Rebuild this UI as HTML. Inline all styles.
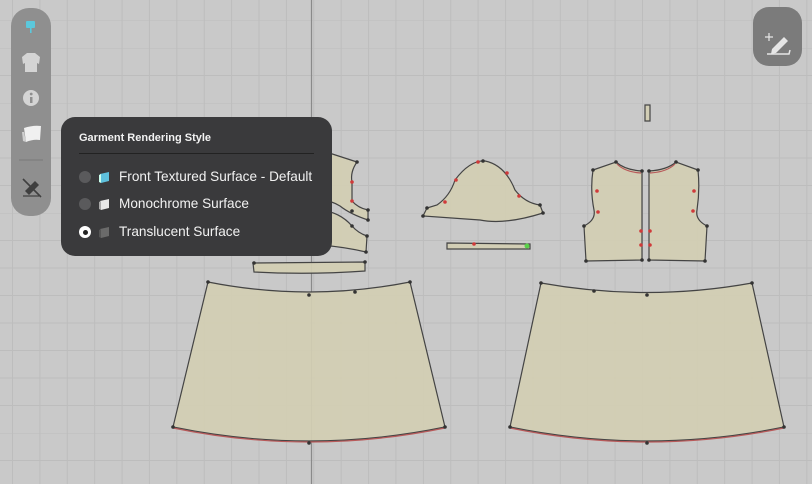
<!DOCTYPE html>
<html><head><meta charset="utf-8"><style>
html,body{margin:0;padding:0}
body{width:812px;height:484px;overflow:hidden;position:relative;background:#c9c9c9;font-family:"Liberation Sans",sans-serif;
background-image:linear-gradient(to right,#bdbdbd 1px,transparent 1px),linear-gradient(to bottom,#bdbdbd 1px,transparent 1px);
background-size:27.4px 27.5px;background-position:12px 20px;}
.side{position:absolute;left:11px;top:8px;width:40px;height:208px;border-radius:18px;background:#8f8f8f;}
.btn{position:absolute;left:753px;top:7px;width:49px;height:59px;border-radius:16px;background:#7b7b7b;}
.pop{position:absolute;left:61px;top:117px;width:271px;height:139px;border-radius:14px;background:#3a3a3c;color:#f2f2f2;}
.pop .t{position:absolute;left:18px;top:15px;font-size:11px;font-weight:bold;}
.pop .hr{position:absolute;left:18px;right:18px;top:36px;height:1px;background:#222;}
.opt{position:absolute;left:18px;font-size:13.6px;height:16px;line-height:16px;}
.opt .r{position:absolute;left:0;top:2px;width:12px;height:12px;border-radius:50%;background:#5a5a5c;}
.opt .r.on{background:#fff;}
.opt .r.on:after{content:"";position:absolute;left:3.5px;top:3.5px;width:5px;height:5px;border-radius:50%;background:#222;}
.opt .i{position:absolute;left:19px;top:2px;}
.opt span{position:absolute;left:40px;white-space:nowrap;}
</style></head><body>
<svg width="812" height="484" style="position:absolute;left:0;top:0">
<line x1="311.5" y1="0" x2="311.5" y2="484" stroke="#8a8a8a" stroke-width="1.2"/>
<g fill="#d3ceb3" fill-opacity="0.92" stroke="#444" stroke-width="1.2">
<path d="M208 282 Q309 302 410 282 L445 427 Q309 455 173 427 Z"/>
<path d="M541 283 Q647 302 752 283 L784 427 Q647 455 510 427 Z"/>
<path d="M253 263 L365 262 L365 271 Q309 275 254 272 Z"/>
<path d="M320 150 L357 162 Q350 172 352 182 L352 201 Q358 208 368 210 L368 220 Q350 214 340 206 Q330 200 320 200 Z"/>
<path d="M320 210 Q340 212 352 226 Q358 233 367 236 L366 252 Q345 247 320 245 Z"/>
<path d="M423 216 L427 208 L437 205 Q450 196 455 180 Q470 160 485 161 Q505 165 515 190 Q525 203 540 205 L543 213 Q505 225 480 220 Q450 218 423 216 Z"/>
<path d="M447 243 L530 244 L530 249 L447 249 Z"/>
<path d="M645 105 L650 105 L650 121 L645 121 Z"/>
<path d="M593 170 L616 162 Q625 170 642 171 L642 260 L586 261 L584 226 Q596 220 594 210 Q590 190 593 170 Z"/>
<path d="M698 170 L676 162 Q667 170 649 171 L649 260 L705 261 L707 226 Q695 220 697 210 Q700 190 698 170 Z"/>
</g>
<g fill="none" stroke="#b85a5a" stroke-width="1.2">
<path d="M173 428 Q309 456 445 428"/><path d="M510 428 Q647 456 784 428"/>
<path d="M617 164 Q625 172 641 173"/><path d="M675 164 Q667 172 650 173"/>
</g>
<g fill="#333">
<circle cx="208" cy="282" r="1.8"/><circle cx="410" cy="282" r="1.8"/><circle cx="309" cy="295" r="1.8"/><circle cx="355" cy="292" r="1.8"/>
<circle cx="541" cy="283" r="1.8"/><circle cx="752" cy="283" r="1.8"/><circle cx="647" cy="295" r="1.8"/><circle cx="594" cy="291" r="1.8"/>
<circle cx="173" cy="427" r="1.8"/><circle cx="445" cy="427" r="1.8"/><circle cx="510" cy="427" r="1.8"/><circle cx="784" cy="427" r="1.8"/>
<circle cx="309" cy="443" r="1.8"/><circle cx="647" cy="443" r="1.8"/>
<circle cx="593" cy="170" r="1.8"/><circle cx="616" cy="162" r="1.8"/><circle cx="642" cy="171" r="1.8"/><circle cx="642" cy="260" r="1.8"/><circle cx="586" cy="261" r="1.8"/><circle cx="584" cy="226" r="1.8"/>
<circle cx="698" cy="170" r="1.8"/><circle cx="676" cy="162" r="1.8"/><circle cx="649" cy="171" r="1.8"/><circle cx="649" cy="260" r="1.8"/><circle cx="705" cy="261" r="1.8"/><circle cx="707" cy="226" r="1.8"/>
<circle cx="423" cy="216" r="1.8"/><circle cx="427" cy="208" r="1.8"/><circle cx="540" cy="205" r="1.8"/><circle cx="543" cy="213" r="1.8"/><circle cx="483" cy="161" r="1.8"/>
<circle cx="365" cy="262" r="1.8"/><circle cx="254" cy="263" r="1.8"/>
<circle cx="357" cy="162" r="1.8"/><circle cx="368" cy="210" r="1.8"/><circle cx="368" cy="220" r="1.8"/><circle cx="352" cy="211" r="1.8"/>
<circle cx="367" cy="236" r="1.8"/><circle cx="352" cy="226" r="1.8"/><circle cx="366" cy="252" r="1.8"/>
</g>
<g fill="#d03a3a">
<circle cx="478" cy="162" r="1.8"/><circle cx="456" cy="180" r="1.8"/><circle cx="507" cy="173" r="1.8"/><circle cx="519" cy="196" r="1.8"/><circle cx="445" cy="202" r="1.8"/><circle cx="474" cy="244" r="1.8"/>
<circle cx="597" cy="191" r="1.8"/><circle cx="598" cy="212" r="1.8"/><circle cx="694" cy="191" r="1.8"/><circle cx="693" cy="211" r="1.8"/>
<circle cx="641" cy="231" r="1.8"/><circle cx="641" cy="245" r="1.8"/><circle cx="650" cy="231" r="1.8"/><circle cx="650" cy="245" r="1.8"/>
<circle cx="352" cy="182" r="1.8"/><circle cx="352" cy="201" r="1.8"/>
</g>
<circle cx="527" cy="246" r="2.5" fill="#5ad04a"/>
</svg>
<div class="side">
<svg width="40" height="208" style="position:absolute;left:0;top:0">
<rect x="15" y="13" width="9" height="7" rx="1" fill="#5cc8dc"/><rect x="19" y="20" width="1.6" height="5" fill="#5cc8dc"/>
<path d="M16 45 L24 45 L29 49 L28 56 L26 55 L26 64 L14 64 L14 55 L12 56 L11 49 Z" fill="#d4d4d4"/>
<circle cx="20" cy="90" r="8" fill="#d4d4d4"/><rect x="19" y="89" width="2.5" height="6" fill="#8f8f8f"/><circle cx="20.2" cy="86" r="1.4" fill="#8f8f8f"/>
<path d="M13 120 Q22 117 30 118 L29 132 Q22 131 15 134 Z" fill="#f0f0f0"/><path d="M11 124 L13 124 L15 134 L12 133 Z" fill="#d0d0d0"/>
<line x1="8" y1="152" x2="32" y2="152" stroke="#7a7a7a"/>
<path d="M14 183 L24 173 L28 177 L18 187 Z" fill="#3f3f3f"/><line x1="12" y1="171" x2="30" y2="189" stroke="#3f3f3f" stroke-width="1.6"/><line x1="12" y1="188" x2="28" y2="188" stroke="#3f3f3f" stroke-width="1.2"/>
</svg></div>
<div class="btn"><svg width="49" height="59">
<path d="M12 30 H20 M16 26 V34" stroke="#e6e6e6" stroke-width="1.2"/>
<path d="M19 42 L31 30 L35 34 L23 46 L18 47 Z" fill="#e6e6e6"/>
<path d="M14 47 H36 L37 43" stroke="#e6e6e6" stroke-width="1.5" fill="none"/>
</svg></div>
<div class="pop">
<div class="t">Garment Rendering Style</div><div class="hr"></div>
<div class="opt" style="top:52px"><div class="r"></div><svg class="i" width="14" height="13"><path d="M2 3 L11 1 L11 10 L3 12 Z" fill="#5ec0dc"/><path d="M1 4 L3 3 L3 12 L1 11Z" fill="#cfe"/></svg><span>Front Textured Surface - Default</span></div>
<div class="opt" style="top:79px"><div class="r"></div><svg class="i" width="14" height="13"><path d="M2 3 L11 1 L11 10 L3 12 Z" fill="#e8e8e8"/><path d="M1 4 L3 3 L3 12 L1 11Z" fill="#aaa"/></svg><span>Monochrome Surface</span></div>
<div class="opt" style="top:107px"><div class="r on"></div><svg class="i" width="14" height="13"><path d="M2 3 L11 1 L11 10 L3 12 Z" fill="#6a6a6a"/><path d="M1 4 L3 3 L3 12 L1 11Z" fill="#555"/></svg><span>Translucent Surface</span></div>
</div>
</body></html>
